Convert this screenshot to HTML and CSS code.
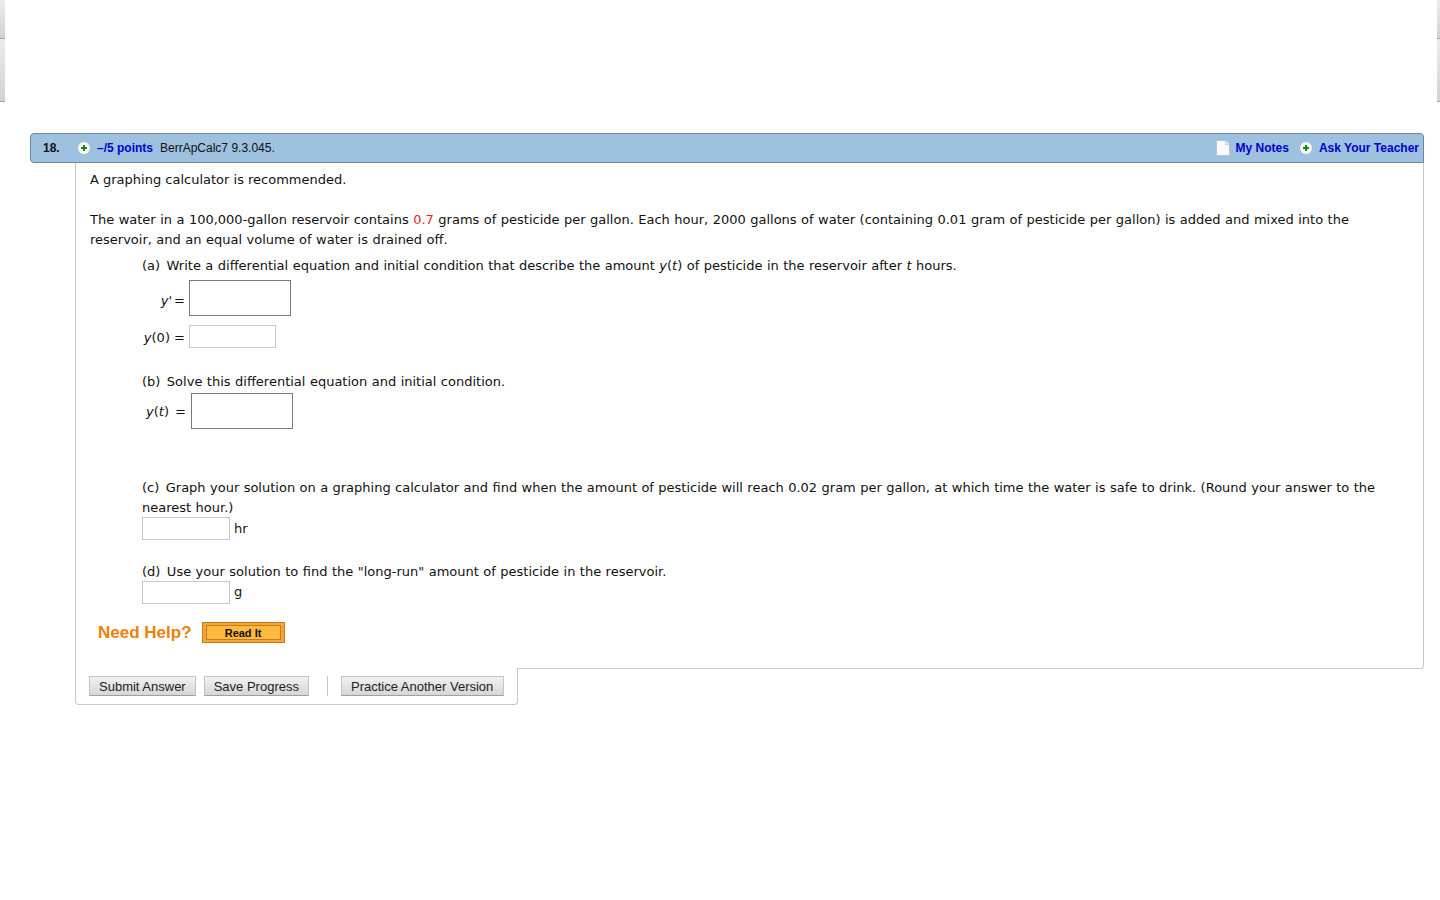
FILE: index.html
```html
<!DOCTYPE html>
<html lang="en">

<head>
    <meta charset="UTF-8">
    <title>Question 18</title>
    <link rel="stylesheet" href="styles.css">
</head>

<body>
    <!-- leftover window chrome at the top edges -->
    <div class="top-band">
        <div class="edge edge-left"><div class="edge-a"></div><div class="edge-b"></div></div>
        <div class="edge edge-right"><div class="edge-a"></div><div class="edge-b"></div></div>
    </div>

    <div class="question">
        <div class="q-header">
            <div class="q-left">
                <span class="q-num">18.</span>
                <svg class="plus" width="14" height="14" viewBox="0 0 14 14">
                    <circle cx="7" cy="7" r="6.5" fill="#b4bfc8"/>
                    <circle cx="7" cy="7" r="5.9" fill="#f8f8f8"/>
                    <path d="M7 4v6M4 7h6" stroke="#0a8a12" stroke-width="2"/>
                </svg>
                <span class="q-points">&ndash;/5 points</span>
                <span class="q-code">BerrApCalc7 9.3.045.</span>
            </div>
            <div class="q-right">
                <svg class="note" width="14" height="16" viewBox="0 0 14 16">
                    <path d="M.5.5h9l4 4v11H.5z" fill="#fbfbfb" stroke="#b4c4d2"/>
                    <path d="M9.5.5v4h4" fill="#e8ebee" stroke="#c4d0da"/>
                </svg>
                <a class="q-link link-notes">My Notes</a>
                <svg class="plus" width="14" height="14" viewBox="0 0 14 14">
                    <circle cx="7" cy="7" r="6.5" fill="#b4bfc8"/>
                    <circle cx="7" cy="7" r="5.9" fill="#f8f8f8"/>
                    <path d="M7 4v6M4 7h6" stroke="#0a8a12" stroke-width="2"/>
                </svg>
                <a class="q-link">Ask Your Teacher</a>
            </div>
        </div>

        <div class="q-body">
            <p class="intro">A graphing calculator is recommended.</p>
            <p class="stem">The water in a 100,000-gallon reservoir contains <span class="red">0.7</span> grams of pesticide per gallon. Each hour, 2000 gallons of water (containing 0.01 gram of pesticide per gallon) is added and mixed into the<br>reservoir, and an equal volume of water is drained off.</p>

            <div class="part part-a">
                <p><span class="tag">(a)</span> Write a differential equation and initial condition that describe the amount <i>y</i>(<i>t</i>) of pesticide in the reservoir after <i>t</i> hours.</p>
                <div class="eq eq-prime">
                    <span class="eq-label"><i>y'</i> =</span>
                    <span class="box-big"></span>
                </div>
                <div class="eq eq-zero">
                    <span class="eq-label"><i>y</i>(0) =</span>
                    <span class="box-small"></span>
                </div>
            </div>

            <div class="part part-b">
                <p><span class="tag">(b)</span> Solve this differential equation and initial condition.</p>
                <div class="eq eq-sol">
                    <span class="eq-label"><i>y</i>(<i>t</i>) =</span>
                    <span class="box-big"></span>
                </div>
            </div>

            <div class="part part-c">
                <p><span class="tag">(c)</span> Graph your solution on a graphing calculator and find when the amount of pesticide will reach 0.02 gram per gallon, at which time the water is safe to drink. (Round your answer to the<br>nearest hour.)</p>
                <div class="answer">
                    <span class="box-small box-wide"></span>
                    <span>hr</span>
                </div>
            </div>

            <div class="part part-d">
                <p><span class="tag">(d)</span> Use your solution to find the "long-run" amount of pesticide in the reservoir.</p>
                <div class="answer">
                    <span class="box-small box-wide"></span>
                    <span class="unit-g">g</span>
                </div>
            </div>

            <div class="help">
                <span class="help-label">Need Help?</span>
                <span class="read-it"><span>Read It</span></span>
            </div>
        </div>

        <div class="actions">
            <button class="btn btn-submit">Submit Answer</button>
            <button class="btn">Save Progress</button>
            <span class="divider"></span>
            <button class="btn btn-practice">Practice Another Version</button>
        </div>
    </div>
</body>

</html>
```

FILE: styles.css
```css
html, body {
    margin: 0;
    padding: 0;
    background: #fff;
}

body {
    height: 900px;
    overflow: hidden;
    font-family: "DejaVu Sans", Verdana, sans-serif;
    font-size: 13px;
    color: #111;
}

p {
    margin: 0;
}

.top-band {
    display: flex;
    justify-content: space-between;
    height: 102px;
    margin-bottom: 31px;
}

.edge {
    height: 102px;
}

.edge-left {
    width: 5px;
}

.edge-right {
    width: 3px;
}

.edge-a,
.edge-b {
    box-sizing: border-box;
    background: linear-gradient(#ececec, #d2d2d2);
    border-bottom: 1px solid #a6a6a6;
}

.edge-a {
    height: 39px;
}

.edge-b {
    height: 63px;
}

.question {
    margin-left: 30px;
    width: 1394px;
}

.q-header {
    box-sizing: border-box;
    height: 30px;
    display: flex;
    justify-content: space-between;
    align-items: center;
    background: #9dc1de;
    border: 1px solid #6e8696;
    border-radius: 4px 4px 0 4px;
    font-family: "Liberation Sans", Arial, sans-serif;
    font-size: 12px;
}

.q-left,
.q-right {
    display: flex;
    align-items: center;
}

.q-num {
    font-weight: 700;
    margin-left: 12px;
    width: 34px;
    color: #111;
}

.q-points {
    font-weight: 700;
    color: #0000cc;
    margin-left: 6px;
}

.q-code {
    margin-left: 7px;
    color: #111;
}

.q-right {
    margin-right: 4px;
}

.note {
    margin-right: 6px;
}

.q-link {
    font-weight: 700;
    color: #0000cc;
}

.link-notes {
    margin-right: 10px;
}

.q-right .plus {
    margin-right: 6px;
}

.q-body {
    box-sizing: border-box;
    height: 506px;
    margin-left: 45px;
    padding: 7px 14px 0;
    border-left: 1px solid #c8c8c8;
    border-right: 1px solid #c8c8c8;
    border-bottom: 1px solid #c8c8c8;
    border-radius: 0 0 4px 0;
    line-height: 20px;
    word-spacing: 0.33px;
}

.intro {
    margin-bottom: 20px;
    word-spacing: 0;
}

.red {
    color: #e8251f;
}

.part {
    margin-left: 52px;
}

.part-a {
    margin-top: 6px;
}

.tag {
    margin-right: 2px;
}

.eq {
    display: flex;
    align-items: center;
}

.eq-label {
    text-align: right;
    margin-right: 4px;
    word-spacing: 0;
}

.eq-prime {
    margin-top: 4px;
}

.eq-prime .eq-label {
    width: 43px;
    padding-top: 5px;
    word-spacing: -2px;
}

.eq-zero {
    margin-top: 9px;
}

.eq-zero .eq-label {
    width: 43px;
    padding-top: 2px;
}

.eq-sol .eq-label {
    width: 44px;
    margin-right: 5px;
    padding-top: 2px;
    word-spacing: 2px;
}

.box-big {
    box-sizing: border-box;
    display: block;
    width: 102px;
    height: 36px;
    background: #fff;
    border: 1px solid #7a7a7a;
}

.box-small {
    box-sizing: border-box;
    display: block;
    width: 87px;
    height: 23px;
    background: #fff;
    border: 1px solid #c8c8c8;
}

.box-wide {
    width: 88px;
}

.part-b {
    margin-top: 24px;
}

.eq-sol {
    margin-top: 1px;
}

.part-c {
    margin-top: 49px;
    word-spacing: 0.28px;
}

.answer {
    display: flex;
    align-items: center;
    gap: 4px;
    margin-top: -1px;
}

.unit-g {
    margin-top: -2px;
}

.part-d {
    margin-top: 22px;
}

.help {
    display: flex;
    align-items: center;
    margin-top: 18px;
    margin-left: 8px;
    font-family: "Liberation Sans", Arial, sans-serif;
    word-spacing: 0;
}

.help-label {
    color: #ef7f0a;
    font-size: 17px;
    font-weight: 700;
    margin-right: 10px;
}

.read-it {
    box-sizing: border-box;
    display: block;
    width: 83px;
    height: 21px;
    padding: 2px 3px;
    background: #f3a53a;
    border: 1px solid #c87a1f;
}

.read-it span {
    box-sizing: border-box;
    display: block;
    height: 15px;
    line-height: 15px;
    text-align: center;
    font-size: 11px;
    font-weight: 700;
    color: #111;
    background: #ffb93f;
    border: 1px solid #c87a1f;
}

.actions {
    box-sizing: border-box;
    width: 443px;
    height: 37px;
    margin-left: 45px;
    margin-top: -1px;
    padding: 8px 0 0 13px;
    position: relative;
    display: flex;
    align-items: flex-start;
    background: #fff;
    border-left: 1px solid #c8c8c8;
    border-right: 1px solid #c8c8c8;
    border-bottom: 1px solid #c8c8c8;
    border-radius: 0 0 4px 4px;
}

.btn {
    box-sizing: border-box;
    flex-shrink: 0;
    height: 20px;
    padding: 1px 9px 0;
    margin: 0;
    font-family: "Liberation Sans", Arial, sans-serif;
    font-size: 13px;
    line-height: 18px;
    white-space: nowrap;
    color: #222;
    background: linear-gradient(#f2f2f2, #d6d6d6);
    border: 1px solid #c4c4c4;
    border-bottom-color: #a0a0a0;
    border-radius: 0;
}

.btn-submit {
    margin-right: 8px;
}

.btn-practice {
    padding-left: 9px;
    padding-right: 10px;
}

.divider {
    display: block;
    width: 1px;
    height: 20px;
    background: #c8c8c8;
    margin: 0 13px 0 18px;
}
```
